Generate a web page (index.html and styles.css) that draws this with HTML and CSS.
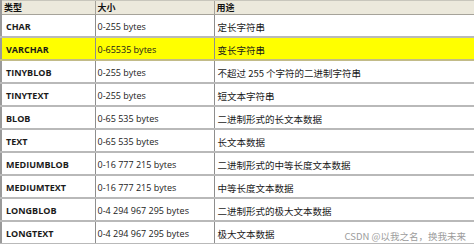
FILE: index.html
```html
<!DOCTYPE html>
<html>
<head>
<meta charset="utf-8">
<link rel="stylesheet" href="styles.css">
</head>
<body>
<div class="page">
<table class="types">
  <colgroup><col class="c1"><col class="c2"><col class="c3"></colgroup>
  <thead>
    <tr><th>类型</th><th>大小</th><th>用途</th></tr>
  </thead>
  <tbody>
    <tr><td class="name">CHAR</td><td>0-255 bytes</td><td class="cn">定长字符串</td></tr>
    <tr class="hl"><td class="name">VARCHAR</td><td>0-65535 bytes</td><td class="cn">变长字符串</td></tr>
    <tr><td class="name">TINYBLOB</td><td>0-255 bytes</td><td class="cn">不超过 255 个字符的二进制字符串</td></tr>
    <tr><td class="name">TINYTEXT</td><td>0-255 bytes</td><td class="cn">短文本字符串</td></tr>
    <tr><td class="name">BLOB</td><td>0-65 535 bytes</td><td class="cn">二进制形式的长文本数据</td></tr>
    <tr><td class="name">TEXT</td><td>0-65 535 bytes</td><td class="cn">长文本数据</td></tr>
    <tr><td class="name">MEDIUMBLOB</td><td>0-16 777 215 bytes</td><td class="cn">二进制形式的中等长度文本数据</td></tr>
    <tr><td class="name">MEDIUMTEXT</td><td>0-16 777 215 bytes</td><td class="cn">中等长度文本数据</td></tr>
    <tr><td class="name">LONGBLOB</td><td>0-4 294 967 295 bytes</td><td class="cn">二进制形式的极大文本数据</td></tr>
    <tr><td class="name">LONGTEXT</td><td>0-4 294 967 295 bytes</td><td class="cn">极大文本数据</td></tr>
  </tbody>
</table>
<div class="mark">CSDN @以我之名，换我未来</div>
</div>
</body>
</html>
```
FILE: styles.css
```css
html, body {
  margin: 0;
  padding: 0;
  background: #ffffff;
  overflow: hidden;
}
.page {
  position: relative;
  width: 474px;
  height: 244px;
  overflow: hidden;
}
.types {
  border-collapse: collapse;
  table-layout: fixed;
  width: 480px;
  font-family: "Open Sans", "Liberation Sans", "Noto Sans CJK SC", sans-serif;
  font-size: 9px;
  color: #1a1a1a;
  border-left: 2px solid #9a9a9a;
}
.c1 { width: 94px; }
.c2 { width: 119px; }
.c3 { width: 267px; }
.types th {
  background: #ece9dc;
  height: 13px;
  padding: 0 0 0 2px;
  text-align: left;
  font-family: "Noto Sans CJK SC", sans-serif;
  font-weight: bold;
  font-size: 9px;
  line-height: 13px;
  border-top: 1px solid #c8c6bc;
  border-bottom: 1px solid #a6a39a;
  border-left: 1px solid #a6a39a;
  color: #111;
}
.types th:first-child { border-left: none; }
.types td {
  height: 18px;
  padding: 3px 0 0 2px;
  line-height: 12px;
  border-bottom: 2px solid #b9b9b9;
  border-left: 1px solid #8e8e8e;
  white-space: nowrap;
  overflow: hidden;
}
.types td:first-child { border-left: none; }
.types td.name {
  font-weight: bold;
  font-size: 9px;
  padding-left: 4px;
}
.types td.cn {
  font-family: "Noto Sans CJK SC", sans-serif;
  font-size: 9.5px;
  padding-left: 3px;
}
.types tr.hl td {
  background: #ffff00;
  border-bottom-color: #c2bb88;
}
.mark {
  position: absolute;
  right: 8px;
  bottom: 1px;
  font-family: "Noto Sans CJK SC", sans-serif;
  font-size: 9.5px;
  color: #9c9c9c;
  line-height: 14px;
}
```
